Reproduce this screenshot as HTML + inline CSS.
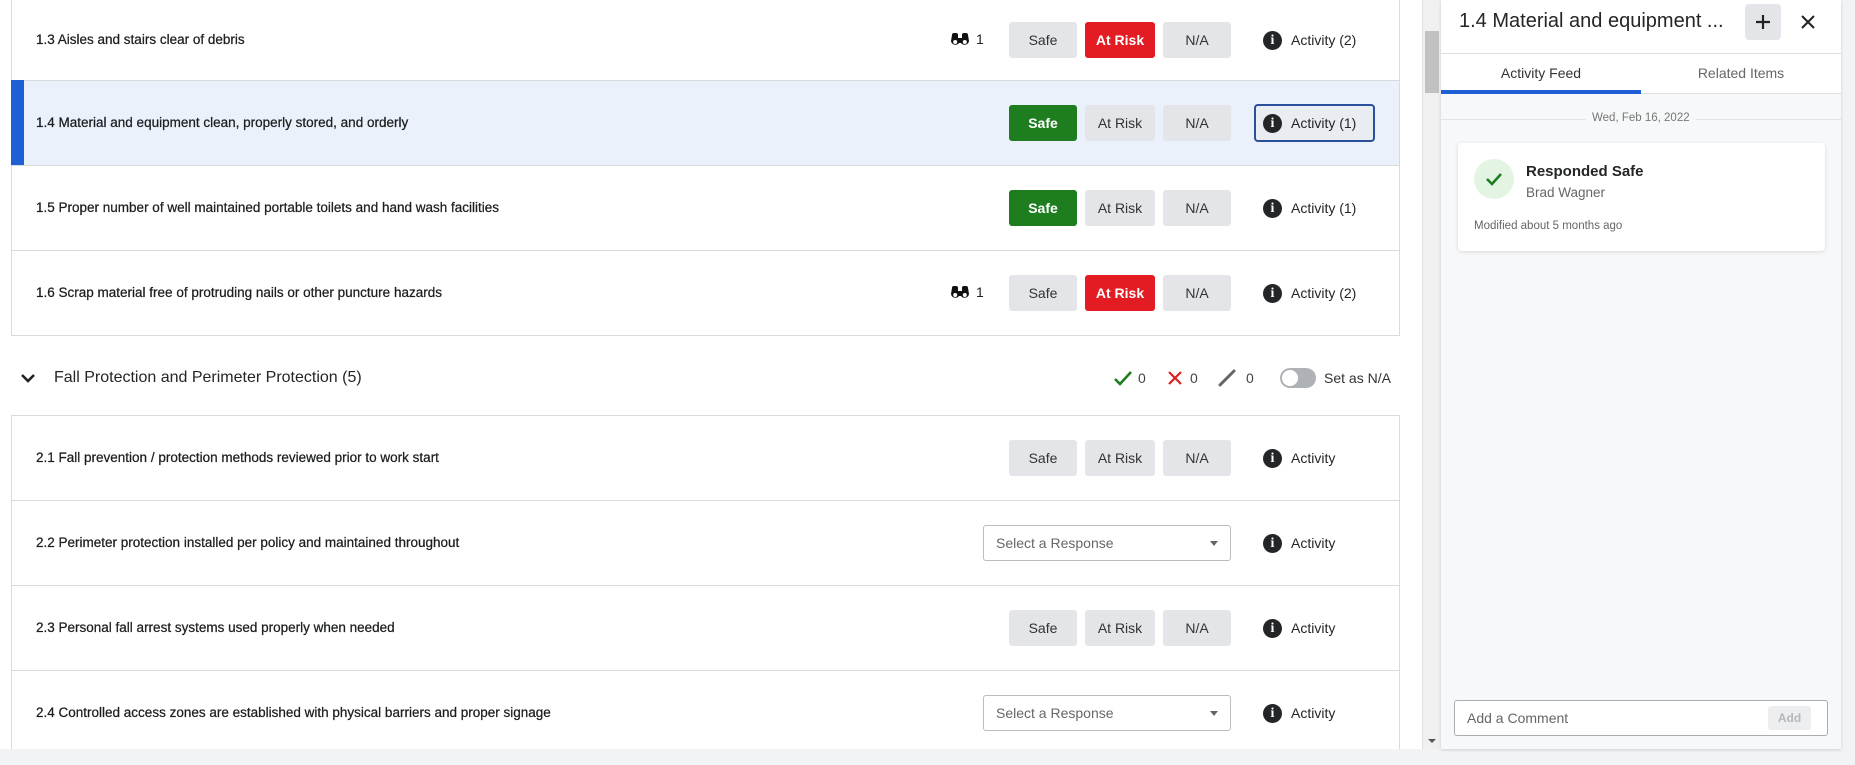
<!DOCTYPE html>
<html><head><meta charset="utf-8"><style>
*{box-sizing:border-box;margin:0;padding:0}
body{width:1855px;height:765px;overflow:hidden;background:#f2f3f4;font-family:"Liberation Sans",sans-serif;color:#222;position:relative}
.abs{position:absolute}
#left{position:absolute;left:0;top:0;width:1422px;height:749px;background:#fff;overflow:hidden}
.row{position:absolute;left:11px;width:1389px;height:86px;border:1px solid #d8dadd;background:#fff}
.row .lbl{position:absolute;left:24px;top:0;line-height:84px;font-size:13.5px;color:#1c1e20;-webkit-text-stroke:0.25px #1c1e20}
.btn{position:absolute;top:24px;height:36px;width:68px;border-radius:3px;background:#e3e5e8;font-size:14px;text-align:center;line-height:36px;color:#333}
.safe{left:997px}.risk{left:1073px;width:70px}.na{left:1151px}
.g{background:#1e7e1f;color:#fff;font-weight:bold}
.r{background:#e31b23;color:#fff;font-weight:bold}
.act{position:absolute;left:1251px;top:32px;height:20px;font-size:14px;color:#232527;display:flex;align-items:center}
.ic{display:inline-block;width:19px;height:19px;border-radius:50%;background:#232527;color:#fff;font-weight:bold;font-family:"Liberation Serif",serif;font-size:14px;text-align:center;line-height:19px;margin-right:9px}
.bino{position:absolute;left:938px;top:33px;font-size:14px;display:flex;align-items:center;gap:6px}
.sel{position:absolute;left:971px;top:24px;width:248px;height:36px;border:1px solid #b9bcc0;border-radius:3px;font-size:14px;color:#666;line-height:34px;padding-left:12px}
.sel:after{content:"";position:absolute;right:12px;top:15px;border:4px solid transparent;border-top:5px solid #666}
</style></head><body>
<div id="left">
 <div class="row" style="top:-5px;height:86px"><div class="lbl" style="top:2px">1.3 Aisles and stairs clear of debris</div>
  <div class="bino" style="top:35px"><svg width="20" height="15" viewBox="0 0 20 15"><path d="M2 3 Q2 1 4 1 L6 1 Q8 1 8 3 L8 6 L12 6 L12 3 Q12 1 14 1 L16 1 Q18 1 18 3 L19 9 A4.5 4.5 0 0 1 11 11 L9 11 A4.5 4.5 0 0 1 1 9 Z" fill="#111"/><circle cx="5.2" cy="10" r="2" fill="#fff"/><circle cx="14.8" cy="10" r="2" fill="#fff"/></svg>1</div>
  <div class="btn safe" style="top:26px">Safe</div><div class="btn risk r" style="top:26px">At Risk</div><div class="btn na" style="top:26px">N/A</div>
  <div class="act" style="top:34px"><span class="ic">i</span>Activity (2)</div></div>
 <div class="row" style="top:80px;background:#eaf1fb"><div class="abs" style="left:-1px;top:-1px;width:13px;height:86px;background:#1f5fd6"></div>
  <div class="lbl">1.4 Material and equipment clean, properly stored, and orderly</div>
  <div class="btn safe g">Safe</div><div class="btn risk">At Risk</div><div class="btn na">N/A</div>
  <div class="abs" style="left:1242px;top:23px;width:121px;height:38px;border:2px solid #2a4f9c;border-radius:4px;background:#e9edf2"></div>
  <div class="act"><span class="ic">i</span>Activity (1)</div></div>
 <div class="row" style="top:165px"><div class="lbl">1.5 Proper number of well maintained portable toilets and hand wash facilities</div>
  <div class="btn safe g">Safe</div><div class="btn risk">At Risk</div><div class="btn na">N/A</div>
  <div class="act"><span class="ic">i</span>Activity (1)</div></div>
 <div class="row" style="top:250px"><div class="lbl">1.6 Scrap material free of protruding nails or other puncture hazards</div>
  <div class="bino"><svg width="20" height="15" viewBox="0 0 20 15"><path d="M2 3 Q2 1 4 1 L6 1 Q8 1 8 3 L8 6 L12 6 L12 3 Q12 1 14 1 L16 1 Q18 1 18 3 L19 9 A4.5 4.5 0 0 1 11 11 L9 11 A4.5 4.5 0 0 1 1 9 Z" fill="#111"/><circle cx="5.2" cy="10" r="2" fill="#fff"/><circle cx="14.8" cy="10" r="2" fill="#fff"/></svg>1</div>
  <div class="btn safe">Safe</div><div class="btn risk r">At Risk</div><div class="btn na">N/A</div>
  <div class="act"><span class="ic">i</span>Activity (2)</div></div>

 <svg class="abs" style="left:20px;top:372px" width="16" height="12" viewBox="0 0 16 12"><path d="M2 3 L8 9 L14 3" stroke="#222" stroke-width="2.6" fill="none"/></svg>
 <div class="abs" style="left:54px;top:369px;font-size:16px;color:#232527">Fall Protection and Perimeter Protection (5)</div>
 <svg class="abs" style="left:1113px;top:369px" width="20" height="18" viewBox="0 0 20 18"><path d="M2 10 L7 15 L18 3" stroke="#1e7e1f" stroke-width="2.6" fill="none"/></svg>
 <div class="abs" style="left:1138px;top:370px;font-size:14px;color:#444">0</div>
 <svg class="abs" style="left:1167px;top:370px" width="16" height="16" viewBox="0 0 16 16"><path d="M2 2 L14 14 M14 2 L2 14" stroke="#d22" stroke-width="2.2"/></svg>
 <div class="abs" style="left:1190px;top:370px;font-size:14px;color:#444">0</div>
 <svg class="abs" style="left:1217px;top:368px" width="20" height="20" viewBox="0 0 20 20"><path d="M3 17 L17 3" stroke="#666" stroke-width="3" stroke-linecap="round"/></svg>
 <div class="abs" style="left:1246px;top:370px;font-size:14px;color:#444">0</div>
 <div class="abs" style="left:1280px;top:368px;width:36px;height:20px;border-radius:10px;background:#aeb2b7"><div class="abs" style="left:2px;top:2px;width:16px;height:16px;border-radius:50%;background:#fff"></div></div>
 <div class="abs" style="left:1324px;top:370px;font-size:14px;color:#333">Set as N/A</div>

 <div class="row" style="top:415px"><div class="lbl">2.1 Fall prevention / protection methods reviewed prior to work start</div>
  <div class="btn safe">Safe</div><div class="btn risk">At Risk</div><div class="btn na">N/A</div>
  <div class="act"><span class="ic">i</span>Activity</div></div>
 <div class="row" style="top:500px"><div class="lbl">2.2 Perimeter protection installed per policy and maintained throughout</div>
  <div class="sel">Select a Response</div>
  <div class="act"><span class="ic">i</span>Activity</div></div>
 <div class="row" style="top:585px"><div class="lbl">2.3 Personal fall arrest systems used properly when needed</div>
  <div class="btn safe">Safe</div><div class="btn risk">At Risk</div><div class="btn na">N/A</div>
  <div class="act"><span class="ic">i</span>Activity</div></div>
 <div class="row" style="top:670px"><div class="lbl">2.4 Controlled access zones are established with physical barriers and proper signage</div>
  <div class="sel">Select a Response</div>
  <div class="act"><span class="ic">i</span>Activity</div></div>
</div>
<!-- scrollbar -->
<div class="abs" style="left:1422px;top:0;width:19px;height:749px;background:#f0f0f0;border-left:1px solid #e4e4e4"></div>
<div class="abs" style="left:1425px;top:31px;width:14px;height:62px;background:#c1c1c1"></div>
<div class="abs" style="left:1428px;top:739px;border:4px solid transparent;border-top:4px solid #555"></div>
<!-- right panel -->
<div class="abs" style="left:1441px;top:0;width:400px;height:749px;background:#f7f8f9;box-shadow:0 1px 3px rgba(0,0,0,.15)">
 <div class="abs" style="left:0;top:0;width:400px;height:94px;background:#fff;border-bottom:1px solid #dcdee0"></div>
 <div class="abs" style="left:0;top:53px;width:400px;height:1px;background:#dcdee0"></div>
 <div class="abs" style="left:18px;top:10px;font-size:20px;color:#232527">1.4 Material and equipment ...</div>
 <div class="abs" style="left:304px;top:4px;width:36px;height:36px;background:#e3e5e8;border-radius:4px"></div>
 <svg class="abs" style="left:314px;top:14px" width="16" height="16" viewBox="0 0 16 16"><path d="M8 1V15M1 8H15" stroke="#222" stroke-width="2.2"/></svg>
 <svg class="abs" style="left:360px;top:15px" width="14" height="14" viewBox="0 0 14 14"><path d="M1 1L13 13M13 1L1 13" stroke="#222" stroke-width="2"/></svg>
 <div class="abs" style="left:0;top:65px;width:200px;text-align:center;font-size:14px;color:#333">Activity Feed</div>
 <div class="abs" style="left:200px;top:65px;width:200px;text-align:center;font-size:14px;color:#666">Related Items</div>
 <div class="abs" style="left:0;top:90px;width:200px;height:4px;background:#1f5fd6"></div>
 <div class="abs" style="left:0;top:119px;width:400px;height:1px;background:#e2e4e6"></div>
 <div class="abs" style="left:145px;top:112px;padding:0 6px;background:#f7f8f9;font-size:11.5px;color:#777">Wed, Feb 16, 2022</div>
 <div class="abs" style="left:17px;top:143px;width:367px;height:108px;background:#fff;border-radius:4px;box-shadow:0 1px 4px rgba(0,0,0,.12)">
  <div class="abs" style="left:16px;top:16px;width:40px;height:40px;border-radius:50%;background:#e4f4e3"></div>
  <svg class="abs" style="left:27px;top:28px" width="18" height="16" viewBox="0 0 18 16"><path d="M2 8 L7 13 L16 3" stroke="#1e7e1f" stroke-width="2.6" fill="none"/></svg>
  <div class="abs" style="left:68px;top:20px;font-size:15px;font-weight:bold;color:#232527">Responded Safe</div>
  <div class="abs" style="left:68px;top:42px;font-size:13.5px;color:#666">Brad Wagner</div>
  <div class="abs" style="left:16px;top:77px;font-size:11.5px;color:#666">Modified about 5 months ago</div>
 </div>
 <div class="abs" style="left:13px;top:700px;width:374px;height:36px;background:#fff;border:1px solid #a9adb2;border-radius:3px">
  <div class="abs" style="left:12px;top:9px;font-size:14px;color:#666">Add a Comment</div>
  <div class="abs" style="left:313px;top:5px;width:43px;height:24px;background:#eceef0;border-radius:3px;text-align:center;line-height:24px;font-size:12px;font-weight:bold;color:#b5b8bc">Add</div>
 </div>
</div>
</body></html>
